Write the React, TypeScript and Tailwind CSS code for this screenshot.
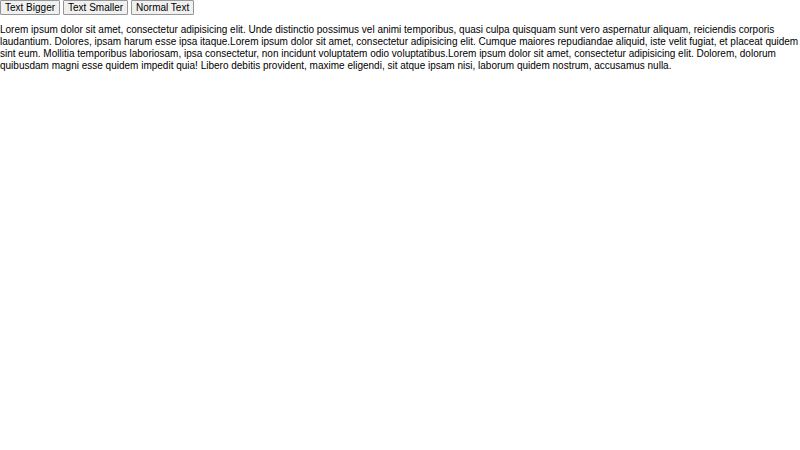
import { useState } from 'react';

const NORMAL_SIZE = 10;
const STEP = 2;

const PARAGRAPHS = [
  'Lorem ipsum dolor sit amet, consectetur adipisicing elit. Unde distinctio possimus vel animi temporibus, quasi culpa quisquam sunt vero aspernatur aliquam, reiciendis corporis laudantium. Dolores, ipsam harum esse ipsa itaque.',
  'Lorem ipsum dolor sit amet, consectetur adipisicing elit. Cumque maiores repudiandae aliquid, iste velit fugiat, et placeat quidem sint eum. Mollitia temporibus laboriosam, ipsa consectetur, non incidunt voluptatem odio voluptatibus.',
  'Lorem ipsum dolor sit amet, consectetur adipisicing elit. Dolorem, dolorum quibusdam magni esse quidem impedit quia! Libero debitis provident, maxime eligendi, sit atque ipsam nisi, laborum quidem nostrum, accusamus nulla.',
];

const buttonClass =
  'rounded-[1px] border border-[#969696] bg-[#f0f0f0] px-1 text-[10px] leading-[13px] text-black active:bg-[#e5e5e5]';

export default function App() {
  const [size, setSize] = useState(NORMAL_SIZE);

  return (
    <div className="font-['Liberation_Sans',Arial,sans-serif] text-black">
      <div className="flex gap-[3px]">
        <button className={buttonClass} onClick={() => setSize(size + STEP)}>
          Text Bigger
        </button>
        <button className={buttonClass} onClick={() => setSize(Math.max(STEP, size - STEP))}>
          Text Smaller
        </button>
        <button className={buttonClass} onClick={() => setSize(NORMAL_SIZE)}>
          Normal Text
        </button>
      </div>

      <p className="mt-[9px] leading-[1.2]" style={{ fontSize: size }}>
        {PARAGRAPHS.join('')}
      </p>
    </div>
  );
}
